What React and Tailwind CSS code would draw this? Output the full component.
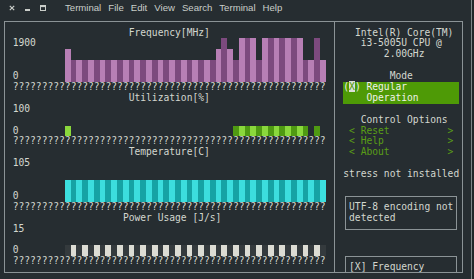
const H = { 0: 'h-0', 1: 'h-[10.9px]', 2: 'h-[21.8px]', 3: 'h-[32.7px]', 4: 'h-[43.6px]' };
const QQ = '?'.repeat(54);

const FREQ = [3, ...Array(25).fill(2), 3, 4, 3, 2, 4, 4, 4, 2, 4, 4, 4, 4, 4, 4, 4, 2, 2, 4, 2];
const UTIL = Array.from({ length: 45 }, (_, i) => (i === 0 || i === 43 || (i >= 29 && i <= 41) ? 1 : 0));
const COLS = Array.from({ length: 45 }, (_, i) => i);

function Bars({ heights, even, odd }) {
  return (
    <div className="flex items-end">
      {COLS.map((i) => (
        <div key={i} className={`w-[5.8px] shrink-0 ${H[heights[i]]} ${i % 2 === 0 ? even : odd}`} />
      ))}
    </div>
  );
}

function Line({ children, className = '' }) {
  return <div className={`h-[10.9px] leading-[10.9px] whitespace-pre ${className}`}>{children}</div>;
}

export default function App() {
  return (
    <div className="w-[474px] h-[279px] bg-[#262d31] flex overflow-hidden text-[#d3d7cf]">
      <div className="w-[471px] flex flex-col">
        {/* title bar */}
        <div className="h-[21px] shrink-0 flex items-start pt-[3px] font-['Liberation_Sans',sans-serif] text-[9.6px] leading-[10px] text-[#c9cdc9]">
          <svg className="ml-[9px] mt-[2px]" width="6" height="6" viewBox="0 0 6 6">
            <path d="M0.8 0.8 L5.2 5.2 M5.2 0.8 L0.8 5.2" stroke="#c9cdc9" strokeWidth="1.2" />
          </svg>
          <div className="ml-[10px] mt-[6px] w-[5px] h-[1.5px] bg-[#c9cdc9]" />
          <svg className="ml-[10px] mt-[2px]" width="6" height="6" viewBox="0 0 6 6">
            <rect x="0.5" y="0.5" width="5" height="5" fill="none" stroke="#c9cdc9" strokeWidth="1" />
            <rect x="0.5" y="0.5" width="5" height="1.6" fill="#c9cdc9" />
          </svg>
          <div className="ml-[19px] flex gap-[7px]">
            <span>Terminal</span>
            <span>File</span>
            <span>Edit</span>
            <span>View</span>
            <span>Search</span>
            <span>Terminal</span>
            <span>Help</span>
          </div>
        </div>

        {/* terminal frame */}
        <div className="ml-[4px] w-[459px] h-[252px] shrink-0 border border-[#8b9396] flex font-['DejaVu_Sans_Mono',monospace] text-[9.63px] overflow-hidden">
          {/* left panel */}
          <div className="w-[330px] shrink-0 border-r border-[#8b9396] pl-[7.7px] pt-[5.5px]">
            {/* Frequency */}
            <Line className="pl-[116px]">Frequency[MHz]</Line>
            <div className="flex h-[43.6px]">
              <div className="w-[52.2px] shrink-0 flex flex-col justify-between">
                <Line>1900</Line>
                <Line>0</Line>
              </div>
              <Bars heights={FREQ} even="bg-[#b77fb5]" odd="bg-[#7c4a7e]" />
            </div>
            <Line>{QQ}</Line>

            {/* Utilization */}
            <Line className="pl-[116px]">Utilization[%]</Line>
            <div className="flex h-[32.7px]">
              <div className="w-[52.2px] shrink-0 flex flex-col justify-between">
                <Line>100</Line>
                <Line>0</Line>
              </div>
              <Bars heights={UTIL} even="bg-[#8ad83c]" odd="bg-[#4f9a12]" />
            </div>
            <Line>{QQ}</Line>

            {/* Temperature */}
            <Line className="pl-[116px]">Temperature[C]</Line>
            <div className="flex h-[43.6px]">
              <div className="w-[52.2px] shrink-0 flex flex-col justify-between">
                <Line>105</Line>
                <Line>0</Line>
              </div>
              <Bars heights={Array(45).fill(2)} even="bg-[#3cdede]" odd="bg-[#16a3a4]" />
            </div>
            <Line>{QQ}</Line>

            {/* Power */}
            <Line className="pl-[110.2px]">Power Usage [J/s]</Line>
            <div className="flex h-[32.7px]">
              <div className="w-[52.2px] shrink-0 flex flex-col justify-between">
                <Line>15</Line>
                <Line>0</Line>
              </div>
              <Bars heights={Array(45).fill(1)} even="bg-[#343a3d]" odd="bg-[#dcdcd4]" />
            </div>
            <Line>{QQ}</Line>
          </div>

          {/* right panel */}
          <div className="flex-1 pl-[8.3px] pt-[5.5px]">
            <Line>{'  Intel(R) Core(TM)'}</Line>
            <Line>{'   i3-5005U CPU @'}</Line>
            <Line>{'       2.00GHz'}</Line>
            <Line> </Line>
            <Line>{'        Mode'}</Line>
            <div className="w-[116px] bg-[#4e9a06] text-[#eef2e8]">
              <Line>
                (<span className="bg-[#dcdfd8] text-[#4e9a06]">X</span>) Regular
              </Line>
              <Line>{'    Operation'}</Line>
            </div>
            <Line> </Line>
            <Line>{'   Control Options'}</Line>
            <Line className="text-[#5a9e16]">{' < Reset          >'}</Line>
            <Line className="text-[#5a9e16]">{' < Help           >'}</Line>
            <Line className="text-[#5a9e16]">{' < About          >'}</Line>
            <Line> </Line>
            <Line>stress not installed</Line>
            <Line> </Line>
            <div className="h-[43.6px]">
              <div className="ml-[2.1px] mt-[5.45px] w-[111.2px] h-[33.7px] border border-[#8b9396] pl-[2.7px] pt-[4.4px]">
                <Line>UTF-8 encoding not</Line>
                <Line>detected</Line>
              </div>
            </div>
            <Line> </Line>
            <div className="h-[21.8px]">
              <div className="ml-[2.1px] mt-[5.45px] w-[111.2px] h-[16.4px] border-t border-x border-[#8b9396] pl-[2.7px] pt-[4.4px]">
                <Line>[X] Frequency</Line>
              </div>
            </div>
          </div>
        </div>
      </div>
      <div className="w-px h-full bg-[#7e868a]" />
      <div className="flex-1 bg-[#20262a]" />
    </div>
  );
}
